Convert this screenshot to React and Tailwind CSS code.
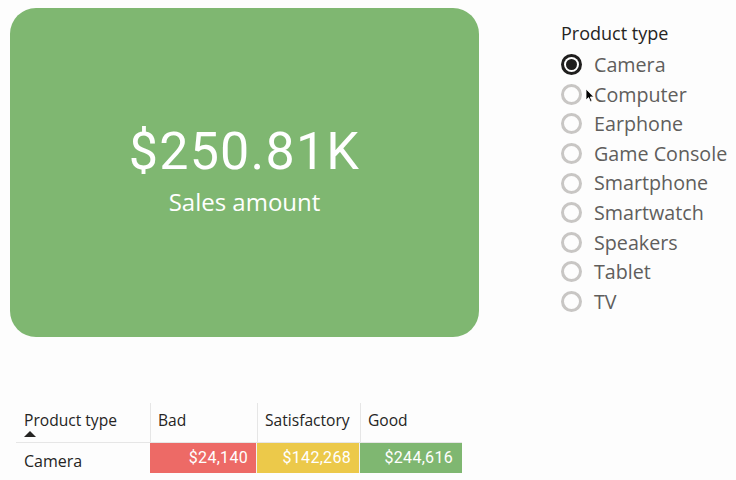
import React from "react";

const items = ["Camera","Computer","Earphone","Game Console","Smartphone","Smartwatch","Speakers","Tablet","TV"];

function Radio({ selected }) {
  if (selected) {
    return (
      <span className="flex h-[21px] w-[21px] items-center justify-center rounded-full bg-[#1f1e1d]">
        <span className="flex h-[15px] w-[15px] items-center justify-center rounded-full bg-white">
          <span className="h-[11px] w-[11px] rounded-full bg-[#1f1e1d]" />
        </span>
      </span>
    );
  }
  return <span className="box-border h-[21px] w-[21px] rounded-full border-[3px] border-[#c8c6c4]" />;
}

export default function App() {
  const sans = { fontFamily: '"Open Sans", "Noto Sans", sans-serif' };
  return (
    <div className="relative h-[480px] w-[736px] overflow-hidden bg-[#fdfdfd]" style={sans}>
      <div className="flex pl-[10px] pt-[8px]">
        <div className="flex h-[329px] w-[469px] flex-col items-center rounded-[26px] bg-[#7fb771] pt-[118px] text-white">
          <div className="text-[52px] leading-[52px] tracking-[1.2px]" style={{ fontFamily: 'Roboto, "DejaVu Sans", sans-serif' }}>$250.81K</div>
          <div className="mt-[8px] text-[24px] leading-[32px]">Sales amount</div>
        </div>
        <div className="ml-[82px] pt-[13px]">
          <div className="text-[18px] leading-[24px] text-[#252423]">Product type</div>
          <div className="mt-[5px] flex flex-col">
            {items.map((it, i) => (
              <div key={it} className="flex h-[29.6px] items-center">
                <Radio selected={i === 0} />
                <span className="ml-[12px] text-[19.7px] leading-[29.6px] text-[#605e5c]">{it}</span>
              </div>
            ))}
          </div>
        </div>
      </div>

      <div className="ml-[16px] mt-[66px] w-[446px]">
        <div className="flex h-[40px] border-b border-[#e6e6e6] text-[15.6px] text-[#252423]">
          <div className="relative w-[134px] pl-[8px] pt-[6px] leading-[22px]">
            Product type
            <svg className="absolute left-[8px] top-[28px]" width="12" height="6" viewBox="0 0 12 6">
              <polygon points="0,6 6,0 12,6" fill="#252423" />
            </svg>
          </div>
          <div className="w-[107px] border-l border-[#e6e6e6] pl-[7px] pt-[6px] leading-[22px]">Bad</div>
          <div className="w-[103px] border-l border-[#e6e6e6] pl-[7px] pt-[6px] leading-[22px]">Satisfactory</div>
          <div className="w-[102px] border-l border-[#e6e6e6] pl-[7px] pt-[6px] leading-[22px]">Good</div>
        </div>
        <div className="flex h-[30px] text-[16px]">
          <div className="w-[134px] pl-[8px] pt-[7px] leading-[22px] text-[#252423]">Camera</div>
          <div className="flex w-[107px] items-center justify-end border-r border-[#f3f3f3] bg-[#ed6a66] pr-[8px] tracking-[0.3px] text-white" style={{ fontFamily: 'Roboto, sans-serif' }}>$24,140</div>
          <div className="flex w-[103px] items-center justify-end border-r border-[#f3f3f3] bg-[#ecc94a] pr-[8px] tracking-[0.3px] text-white" style={{ fontFamily: 'Roboto, sans-serif' }}>$142,268</div>
          <div className="flex w-[102px] items-center justify-end bg-[#7fb771] pr-[9px] tracking-[0.3px] text-white" style={{ fontFamily: 'Roboto, sans-serif' }}>$244,616</div>
        </div>
      </div>

      <svg className="absolute left-[585px] top-[88px]" width="10" height="15" viewBox="0 0 10 15">
        <path d="M1 1 L1 12 L3.6 9.6 L5.4 13.8 L7 13.1 L5.3 9 L8.8 9 Z" fill="#000" stroke="#fff" strokeWidth="0.8" />
      </svg>
    </div>
  );
}
